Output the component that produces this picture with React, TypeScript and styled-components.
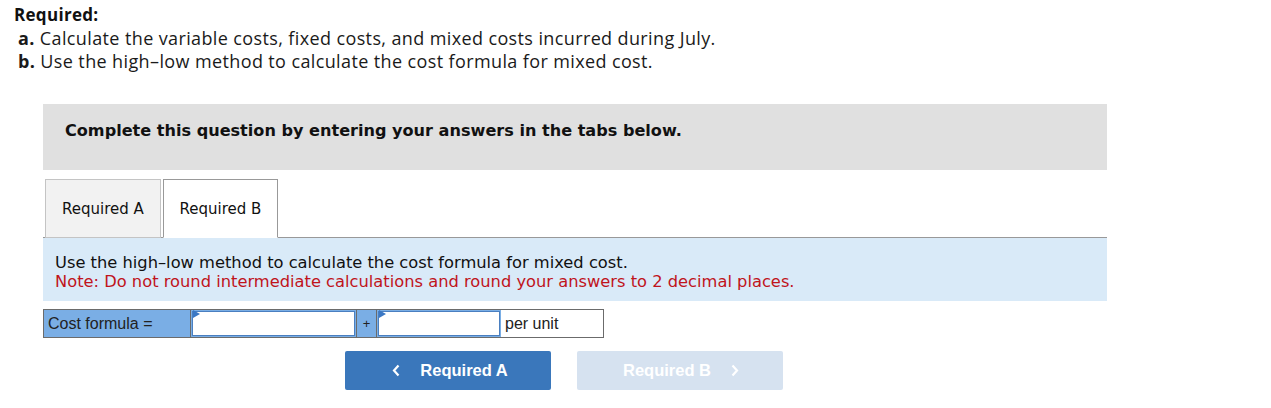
import React from 'react';
import styled, { createGlobalStyle } from 'styled-components';

const GlobalStyle = createGlobalStyle`
  body {
    margin: 0;
    background: #ffffff;
    color: #111;
  }
`;

const Page = styled.div`
  padding: 3px 0 0 14px;
  font-family: 'Open Sans', 'Liberation Sans', Arial, sans-serif;
`;

const Heading = styled.div`
  font-size: 17px;
  font-weight: 700;
  line-height: 24px;
  letter-spacing: 0.3px;
`;

const Requirement = styled.div`
  font-size: 18px;
  line-height: 23px;
  padding-left: 4px;
  color: #1a1a1a;
  letter-spacing: 0.38px;
  b {
    font-weight: 700;
  }
`;

const Question = styled.div`
  margin: 31px 0 0 29px;
  width: 1064px;
`;

const Banner = styled.div`
  height: 66px;
  box-sizing: border-box;
  background: #e0e0e0;
  padding: 17px 0 0 22px;
  font-family: 'DejaVu Sans', Verdana, sans-serif;
  font-weight: 700;
  font-size: 16.1px;
  line-height: 19px;
  color: #111;
`;

const TabRow = styled.div`
  display: flex;
  gap: 2px;
  margin-top: 9px;
  padding-left: 2px;
  border-bottom: 1px solid #999;
`;

const Tab = styled.div<{ $active?: boolean }>`
  width: ${({ $active }) => ($active ? '113px' : '114px')};
  height: 57px;
  display: flex;
  align-items: center;
  justify-content: center;
  font-family: 'DejaVu Sans', Verdana, sans-serif;
  font-size: 15px;
  color: #111;
  background: ${({ $active }) => ($active ? '#ffffff' : '#f2f2f2')};
  border: 1px solid ${({ $active }) => ($active ? '#999' : '#c4c4c4')};
  border-bottom-color: ${({ $active }) => ($active ? '#ffffff' : '#c4c4c4')};
  margin-bottom: -1px;
`;

const Instructions = styled.div`
  background: #d9eaf8;
  height: 63px;
  padding: 15px 0 0 12px;
  box-sizing: border-box;
  font-family: 'DejaVu Sans', Verdana, sans-serif;
  font-size: 16.3px;
  line-height: 19px;
  color: #111;
`;

const Note = styled.div`
  color: #c0141c;
`;

const FormulaRow = styled.div`
  display: flex;
  margin-top: 8px;
  height: 29px;
  width: 561px;
  border: 1px solid #6b6b6b;
  box-sizing: border-box;
  font-family: 'Liberation Sans', Arial, sans-serif;
  font-size: 16px;
`;

const LabelCell = styled.div`
  width: 147px;
  background: #7aaee5;
  border-right: 1px solid #6b6b6b;
  display: flex;
  align-items: center;
  padding-left: 4px;
  box-sizing: border-box;
  color: #222;
`;

const InputCell = styled.div<{ $width: number }>`
  position: relative;
  width: ${({ $width }) => $width}px;
  background: #7aaee5;
  padding: 1px;
  box-sizing: border-box;
`;

const Field = styled.input`
  width: 100%;
  height: 100%;
  box-sizing: border-box;
  border: 1px solid #4a7fc0;
  background: #fff;
  outline: none;
  margin: 0;
`;

const Flag = styled.span`
  position: absolute;
  top: 0;
  left: 2px;
  width: 0;
  height: 0;
  border-top: 4px solid transparent;
  border-bottom: 4px solid transparent;
  border-left: 7px solid #3b78c4;
`;

const PlusCell = styled.div`
  width: 19px;
  background: #7aaee5;
  border-left: 1px solid #6b6b6b;
  border-right: 1px solid #6b6b6b;
  display: flex;
  align-items: center;
  justify-content: center;
  font-size: 13px;
  color: #222;
`;

const UnitCell = styled.div`
  flex: 1;
  background: #fff;
  display: flex;
  align-items: center;
  padding-left: 4px;
  color: #222;
`;

const Nav = styled.div`
  display: flex;
  gap: 26px;
  margin: 13px 0 0 302px;
`;

const NavButton = styled.button<{ $disabled?: boolean }>`
  width: 206px;
  height: 39px;
  border: none;
  border-radius: 2px;
  display: flex;
  align-items: center;
  justify-content: center;
  gap: 20px;
  font-family: 'Liberation Sans', Arial, sans-serif;
  font-weight: 700;
  font-size: 16.5px;
  color: #fff;
  background: ${({ $disabled }) => ($disabled ? '#d6e2f0' : '#3a77bb')};
  cursor: ${({ $disabled }) => ($disabled ? 'default' : 'pointer')};
  padding: ${({ $disabled }) => ($disabled ? '0 0 0 2px' : '0 0 0 4px')};
`;

const Chevron = ({ dir }: { dir: 'left' | 'right' }) => (
  <svg width="8" height="13" viewBox="0 0 8 13" fill="none">
    <path
      d={dir === 'left' ? 'M6.5 1.5L2 6.5l4.5 5' : 'M1.5 1.5L6 6.5l-4.5 5'}
      stroke="#fff"
      strokeWidth="2.2"
    />
  </svg>
);

export default function App() {
  return (
    <>
      <GlobalStyle />
      <Page>
        <Heading>Required:</Heading>
        <Requirement>
          <b>a.</b> Calculate the variable costs, fixed costs, and mixed costs incurred during July.
        </Requirement>
        <Requirement>
          <b>b.</b> Use the high–low method to calculate the cost formula for mixed cost.
        </Requirement>

        <Question>
          <Banner>Complete this question by entering your answers in the tabs below.</Banner>

          <TabRow>
            <Tab>Required A</Tab>
            <Tab $active>Required B</Tab>
          </TabRow>

          <Instructions>
            <div>Use the high–low method to calculate the cost formula for mixed cost.</div>
            <Note>Note: Do not round intermediate calculations and round your answers to 2 decimal places.</Note>
          </Instructions>

          <FormulaRow>
            <LabelCell>Cost formula =</LabelCell>
            <InputCell $width={165}>
              <Field />
              <Flag />
            </InputCell>
            <PlusCell>+</PlusCell>
            <InputCell $width={124}>
              <Field />
              <Flag />
            </InputCell>
            <UnitCell>per unit</UnitCell>
          </FormulaRow>

          <Nav>
            <NavButton>
              <Chevron dir="left" />
              Required A
            </NavButton>
            <NavButton $disabled>
              Required B
              <Chevron dir="right" />
            </NavButton>
          </Nav>
        </Question>
      </Page>
    </>
  );
}
